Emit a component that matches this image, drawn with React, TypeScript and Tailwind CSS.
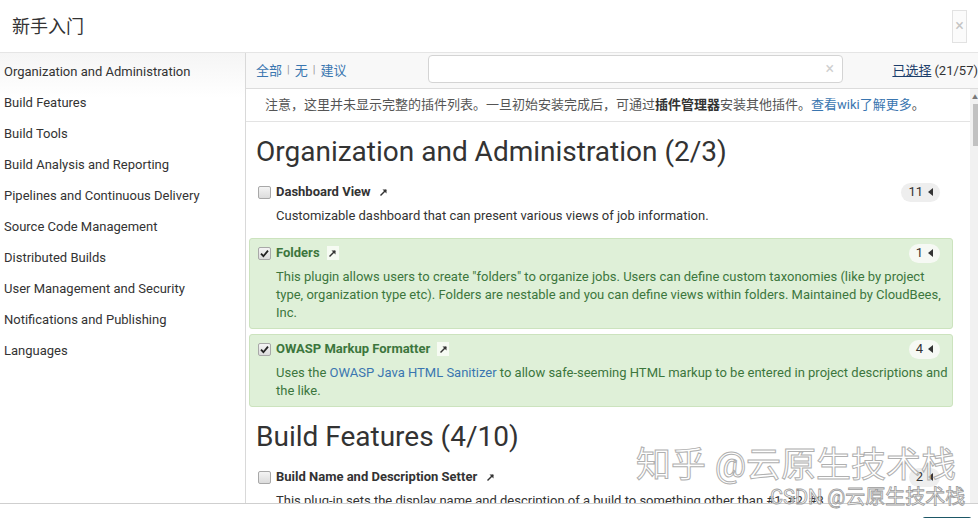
import React from "react";

const SIDEBAR = [
  "Organization and Administration",
  "Build Features",
  "Build Tools",
  "Build Analysis and Reporting",
  "Pipelines and Continuous Delivery",
  "Source Code Management",
  "Distributed Builds",
  "User Management and Security",
  "Notifications and Publishing",
  "Languages",
];

function Checkbox({ checked }: { checked?: boolean }) {
  return (
    <span className="flex h-[13px] w-[13px] shrink-0 items-center justify-center rounded-[2px] border border-[#a8a8a8] bg-gradient-to-b from-[#f4f4f4] to-[#dcdcdc]">
      {checked && (
        <svg width="9" height="9" viewBox="0 0 9 9">
          <path d="M1 4.6 L3.4 7.2 L8 1.6" fill="none" stroke="#222" strokeWidth="1.8" />
        </svg>
      )}
    </span>
  );
}

function LinkArrow() {
  return (
    <span className="ml-[7px] flex h-[14px] w-[12px] items-center justify-center bg-white/70">
      <svg width="9" height="9" viewBox="0 0 9 9">
        <path d="M1.5 7.5 L7 2" stroke="#333" strokeWidth="1.4" />
        <path d="M3.5 1.5 H7.5 V5.5 Z" fill="#333" />
      </svg>
    </span>
  );
}

function Badge({ n, light }: { n: string; light?: boolean }) {
  return (
    <span
      className={
        light
          ? "ml-auto flex h-[19px] items-center gap-[5px] rounded-full bg-[#f6f9f4] px-[7px] text-[13px] text-[#333]"
          : "ml-auto flex h-[19px] items-center gap-[5px] rounded-full bg-[#eeeeee] px-[7px] text-[13px] text-[#333]"
      }
    >
      {n}
      <svg width="5" height="8" viewBox="0 0 5 8">
        <path d="M5 0 V8 L0 4 Z" fill="#333" />
      </svg>
    </span>
  );
}

function Plugin({
  name,
  badge,
  checked,
  children,
}: {
  name: string;
  badge: string;
  checked?: boolean;
  children: React.ReactNode;
}) {
  return (
    <div
      className={
        checked
          ? "mb-[5px] ml-[3px] mr-[17px] rounded-[3px] border border-[#cce3be] bg-[#dff0d8] pb-[6px] pl-[8px] pr-[12px] pt-[4px] text-[#3c763d]"
          : "mb-[6px] ml-[3px] mr-[17px] rounded-[3px] border border-transparent pb-[6px] pl-[8px] pr-[12px] pt-[4px] text-[#333]"
      }
    >
      <div className="flex h-[20px] items-center">
        <Checkbox checked={checked} />
        <span className="ml-[5px] text-[13px] font-bold">{name}</span>
        <LinkArrow />
        <Badge n={badge} light={checked} />
      </div>
      <div className="mt-[5px] whitespace-nowrap pl-[18px] text-[13px] leading-[18px]">
        {children}
      </div>
    </div>
  );
}

function Heading({ children }: { children: React.ReactNode }) {
  return (
    <h2 className="mb-[9px] ml-[10px] mt-[14px] text-[28px] leading-[32px] font-normal text-[#333]">
      {children}
    </h2>
  );
}

export default function App() {
  return (
    <div className="relative h-[518px] w-[978px] overflow-hidden bg-white font-['Roboto','Noto_Sans_CJK_SC',sans-serif] text-[#333]">
      <header className="flex h-[53px] items-center justify-between border-b border-[#e5e5e5]">
        <h1 className="pl-[12px] text-[18px] font-normal text-[#333]">新手入门</h1>
        <span className="mr-[11px] flex h-[33px] w-[15px] items-center justify-center border border-[#e2e2e2] bg-[#fbfbfb] text-[16px] leading-none text-[#c4c4c4]">
          ×
        </span>
      </header>

      <div className="flex h-[450px]">
        <aside className="w-[246px] shrink-0 border-r border-[#d9d9d9] bg-[linear-gradient(#f5f5f5,#ffffff_45px)] pt-[3px]">
          {SIDEBAR.map((s) => (
            <div key={s} className="h-[31px] pl-[4px] text-[13px] leading-[31px] text-[#333]">
              {s}
            </div>
          ))}
        </aside>

        <main className="flex min-w-0 flex-1 flex-col">
          <div className="grid h-[36px] shrink-0 grid-cols-[182px_415px_1fr] border-b border-[#dcdcdc] bg-[#f8f8f8]">
            <div className="flex items-center pl-[10px] text-[13px] text-[#3a76b0]">
              全部<span className="mx-[5px] text-[11px] text-[#999]">|</span>无
              <span className="mx-[5px] text-[11px] text-[#999]">|</span>建议
            </div>
            <div className="mt-[2px] flex h-[28px] items-center justify-end rounded-[4px] border border-[#d4d4d4] bg-white pr-[8px] text-[16px] text-[#cfcfcf]">
              ×
            </div>
            <div className="flex items-center justify-end whitespace-nowrap text-[13px]">
              <span className="text-[#1d3e6b] underline">已选择</span>
              <span className="ml-[3px] text-[#333]">(21/57)</span>
            </div>
          </div>

          <div className="flex min-h-0 flex-1">
            <div className="min-w-0 flex-1 overflow-hidden">
              <div className="flex h-[33px] items-center border-b border-[#e3e3e3] pl-[19px] text-[13px] text-[#555]">
                注意，这里并未显示完整的插件列表。一旦初始安装完成后，可通过
                <b className="font-bold text-[#333]">插件管理器</b>
                安装其他插件。
                <span className="text-[#3a76b0]">查看wiki了解更多</span>。
              </div>

              <Heading>Organization and Administration (2/3)</Heading>
              <Plugin name="Dashboard View" badge="11">
                Customizable dashboard that can present various views of job information.
              </Plugin>
              <Plugin name="Folders" badge="1" checked>
                This plugin allows users to create "folders" to organize jobs. Users can define custom taxonomies (like by project
                <br />
                type, organization type etc). Folders are nestable and you can define views within folders. Maintained by CloudBees,
                <br />
                Inc.
              </Plugin>
              <Plugin name="OWASP Markup Formatter" badge="4" checked>
                Uses the <span className="text-[#3a76b0]">OWASP Java HTML Sanitizer</span> to allow safe-seeming HTML markup to be entered in project descriptions and
                <br />
                the like.
              </Plugin>

              <Heading>Build Features (4/10)</Heading>
              <Plugin name="Build Name and Description Setter" badge="2">
                This plug-in sets the display name and description of a build to something other than #1, #2, #3, ...
              </Plugin>
            </div>

            <div className="flex w-[8px] shrink-0 flex-col items-end bg-[#f1f1f1]">
              <span className="mt-[5px] text-[6px] leading-none text-[#777]">▲</span>
              <span className="mt-[4px] h-[42px] w-[5px] bg-[#c1c1c1]" />
            </div>
          </div>
        </main>
      </div>

      <footer className="flex h-[15px] justify-end border-t border-[#cfcfcf] pr-[6px]">
        <span className="mt-[13px] h-[20px] w-[50px] rounded-t-[3px] border border-[#1d5766] bg-[#2e7486]" />
      </footer>

      <div className="pointer-events-none absolute left-[636px] top-[448px] whitespace-nowrap text-[35px] leading-none text-white/60 [-webkit-text-stroke:1px_#b0b0b0]">
        知乎 @云原生技术栈
      </div>
      <div className="pointer-events-none absolute left-[770px] top-[487px] whitespace-nowrap text-[20px] leading-none text-white/70 [-webkit-text-stroke:0.8px_#9a9a9a]">
        CSDN @云原生技术栈
      </div>
    </div>
  );
}
